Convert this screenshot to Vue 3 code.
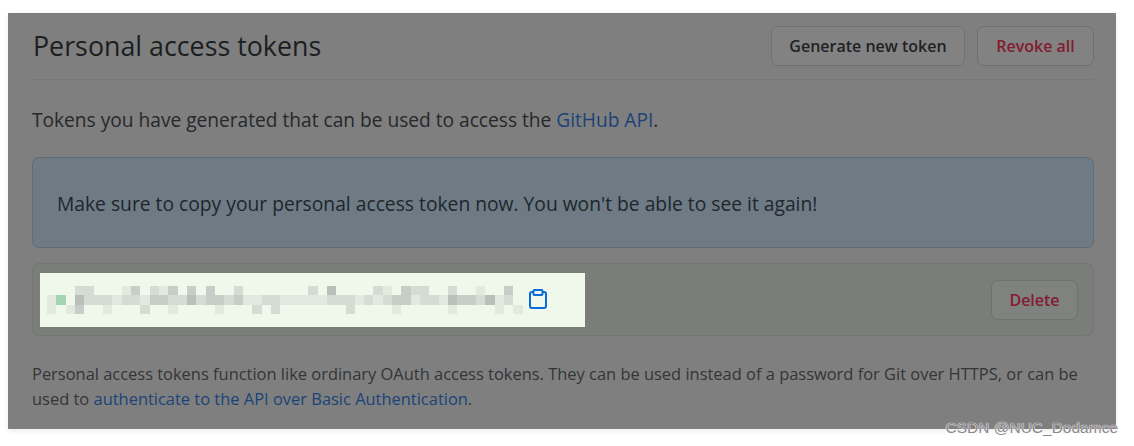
<template>
  <div class="page">
    <div class="panel">
      <div class="header">
        <h2>Personal access tokens</h2>
        <div class="actions">
          <button class="btn btn-generate">Generate new token</button>
          <button class="btn btn-revoke danger">Revoke all</button>
        </div>
      </div>

      <p class="intro">Tokens you have generated that can be used to access the <a href="#">GitHub API</a>.</p>

      <div class="flash">Make sure to copy your personal access token now. You won't be able to see it again!</div>

      <div class="token-row">
        <div class="token-box">
          <div class="token-blur">
            <template v-for="(row, y) in tokenCells" :key="y">
              <span v-for="(cell, x) in row" :key="x" class="pixel" :style="{ background: cell }"></span>
            </template>
          </div>
          <svg class="copy-icon" width="18" height="20" viewBox="0 0 18 20" fill="none">
            <path d="M4.500 3H3A2 2 0 0 0 1 5V17A2 2 0 0 0 3 19H15A2 2 0 0 0 17 17V5A2 2 0 0 0 15 3H13.500" stroke="#0a6ad8" stroke-width="2" />
            <rect x="4.500" y="1" width="9" height="5" rx="1" stroke="#0a6ad8" stroke-width="2" />
          </svg>
        </div>
        <button class="btn btn-delete danger">Delete</button>
      </div>

      <p class="note">
        Personal access tokens function like ordinary OAuth access tokens. They can be used instead of a password for Git over HTTPS, or can be<br />
        used to <a href="#">authenticate to the API over Basic Authentication</a>.
      </p>
    </div>
    <div class="watermark">CSDN @NUC_Dodamce</div>
  </div>
</template>

<script setup>
// blurred token, one digit per block: 0 is the box colour, 9 the darkest grey
const TOKEN_ROWS = [
  '000220001302130303002000000020400002103220020010030',
  '1g0422212213322423323112211111222121233122143324120',
  '101300100020010000100020200000002000010000010000101'
];

const shade = (digit) => {
  if (digit === 'g') return '#a4d4b4';
  const n = Number(digit);
  const r = 240 - n * 14;
  const g = 248 - n * 14;
  const b = 236 - n * 12;
  return `rgb(${r}, ${g}, ${b})`;
};

const tokenCells = TOKEN_ROWS.map((row) => row.split('').map(shade));
</script>

<style scoped>
.page {
  position: relative;
  width: 1134px;
  height: 446px;
  padding: 13px 18px 17px 8px;
  box-sizing: border-box;
  overflow: hidden;
  font-family: "Open Sans", "Noto Sans", sans-serif;
}

.panel {
  height: 416px;
  padding: 0 22px 0 24px;
  box-sizing: border-box;
  background: #7f7f7f;
  box-shadow: 0 2px 6px rgba(0, 0, 0, 0.08);
  color: #26282a;
}

.header {
  display: flex;
  justify-content: space-between;
  align-items: center;
  height: 67px;
  padding-bottom: 1px;
  box-sizing: border-box;
  margin-left: 1px;
  border-bottom: 1px solid #777777;
}

h2 {
  margin: 0;
  font-size: 26.800px;
  font-weight: 400;
  color: #1b1e21;
}

.actions {
  display: flex;
  gap: 12px;
}

.btn {
  height: 40px;
  border: 1px solid #707070;
  border-radius: 7px;
  background: #828282;
  font-family: inherit;
  font-size: 16px;
  font-weight: 600;
  color: #1f2225;
}

.btn-generate {
  width: 194px;
}

.btn-revoke {
  width: 117px;
}

.danger {
  color: #821c30;
}

.intro {
  margin: 28px 0 0;
  font-size: 19.150px;
  line-height: 24px;
}

a {
  color: #1a4378;
  text-decoration: none;
}

.flash {
  display: flex;
  align-items: center;
  height: 91px;
  margin-top: 25px;
  padding: 1px 0 0 24px;
  box-sizing: border-box;
  background: #6e7b85;
  border: 1px solid #5f6b75;
  border-radius: 7px;
  font-size: 19.250px;
  color: #20262c;
}

.token-row {
  display: flex;
  justify-content: space-between;
  align-items: center;
  height: 73px;
  margin-top: 15px;
  padding: 1px 15px 0 7px;
  box-sizing: border-box;
  background: #7a7d79;
  border: 1px solid #737672;
  border-radius: 7px;
}

.token-box {
  display: flex;
  align-items: center;
  width: 545px;
  height: 54px;
  padding-left: 7px;
  box-sizing: border-box;
  background: #f0f8ec;
}

.token-blur {
  display: grid;
  grid-template-columns: repeat(51, 9.33px);
  grid-auto-rows: 9.300px;
  filter: blur(0.7px);
}

.copy-icon {
  margin-left: 6px;
  margin-top: -3px;
}

.btn-delete {
  width: 87px;
  background: #7f827e;
  border-color: #6f726e;
}

.note {
  margin: 25px 0 0;
  font-size: 16.450px;
  line-height: 25px;
  color: #343536;
}

.watermark {
  position: absolute;
  right: 16px;
  top: 419px;
  font-family: "Liberation Sans", Arial, sans-serif;
  font-size: 15.500px;
  color: #8a8a8a;
  text-shadow: 0 0 1px #ffffff, 0 0 1px #ffffff;
}
</style>
